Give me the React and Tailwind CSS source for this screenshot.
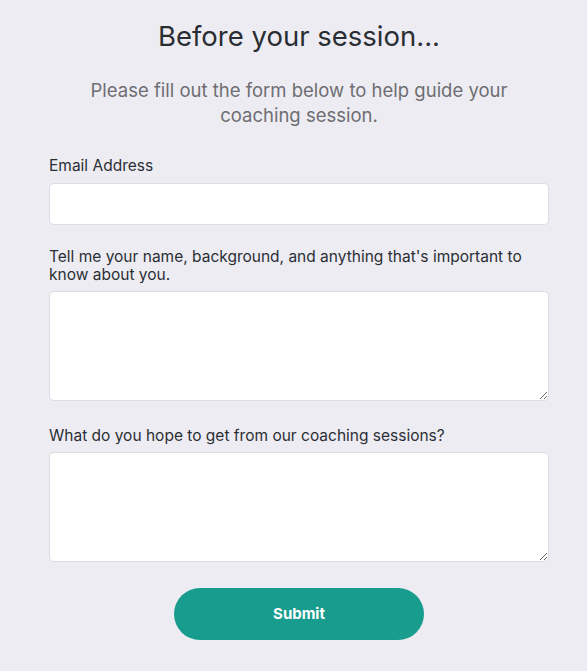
import React from "react";

const fieldClass =
  "block w-full rounded-[5px] border border-[#dcdce2] bg-white px-3 text-[16px] text-[#2b2f33] outline-none";

export default function App() {
  return (
    <div
      className="min-h-screen w-full bg-[#edecf3] pt-[18px]"
      style={{ fontFamily: 'Inter, "Liberation Sans", Arial, sans-serif' }}
    >
      <div className="ml-[49px] w-[500px] flex flex-col">
        {/* Heading */}
        <h1 className="text-center text-[27.5px] leading-[36px] text-[#2a2e33]">
          Before your session...
        </h1>
        <p className="mt-[24px] px-[26px] text-center text-[18.5px] leading-[25px] text-[#6e6e72]">
          Please fill out the form below to help guide your coaching session.
        </p>

        {/* Form */}
        <form className="mt-[28px] flex flex-col" onSubmit={(e) => e.preventDefault()}>
          <label className="text-[15.5px] leading-[20px] text-[#2b2f33]">
            Email Address
          </label>
          <input type="email" className={`${fieldClass} mt-[7px] h-[42px]`} />

          <label className="mt-[23px] text-[15.5px] leading-[18px] text-[#2b2f33]">
            Tell me your name, background, and anything that's important to know
            about you.
          </label>
          <textarea className={`${fieldClass} mt-[7px] h-[110px] py-2`} />

          <label className="mt-[25px] text-[15.5px] leading-[20px] text-[#2b2f33]">
            What do you hope to get from our coaching sessions?
          </label>
          <textarea className={`${fieldClass} mt-[6px] h-[110px] py-2`} />

          <div className="mt-[26px] flex justify-center">
            <button
              type="submit"
              className="h-[52px] w-[250px] rounded-full bg-[#179c8e] text-[15px] font-bold text-white"
            >
              Submit
            </button>
          </div>
        </form>
      </div>
    </div>
  );
}
